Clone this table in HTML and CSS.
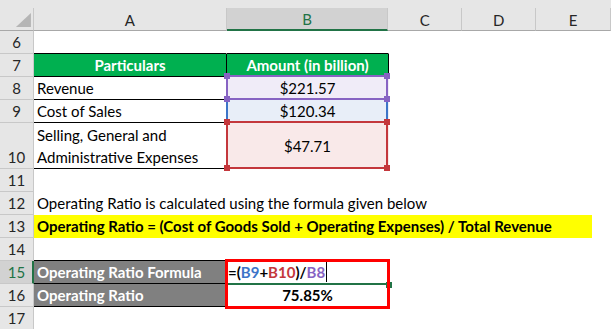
FILE: index.html
```html
<!DOCTYPE html>
<html>
<head>
<meta charset="utf-8">
<link rel="stylesheet" href="styles.css">
</head>
<body>
<div class="sheet">
  <div class="hdr">
    <div class="corner"><div class="tri"></div></div>
    <div class="ch ca">A</div>
    <div class="ch cb sel">B</div>
    <div class="ch cc">C</div>
    <div class="ch cd">D</div>
    <div class="ch ce">E</div>
  </div>

  <div class="row">
    <div class="rh">6</div>
    <div class="c ca bb"></div>
    <div class="c cb bb"></div>
    <div class="c cc"></div><div class="c cd"></div><div class="c ce"></div>
  </div>

  <div class="row">
    <div class="rh">7</div>
    <div class="c ca th bb br">Particulars</div>
    <div class="c cb th bb br">Amount (in billion)</div>
    <div class="c cc"></div><div class="c cd"></div><div class="c ce"></div>
  </div>

  <div class="row">
    <div class="rh">8</div>
    <div class="c ca bb br">Revenue</div>
    <div class="c cb num fill-purple bb">$221.57
      <div class="rng rng-purple"><i class="hd tl"></i><i class="hd tr"></i><i class="hd bl"></i><i class="hd br2"></i></div>
    </div>
    <div class="c cc"></div><div class="c cd"></div><div class="c ce"></div>
  </div>

  <div class="row">
    <div class="rh">9</div>
    <div class="c ca bb br">Cost of Sales</div>
    <div class="c cb num fill-blue bb">$120.34
      <div class="rng rng-blue"></div>
    </div>
    <div class="c cc"></div><div class="c cd"></div><div class="c ce"></div>
  </div>

  <div class="row r10">
    <div class="rh">10</div>
    <div class="c ca bb br">Selling, General and<br>Administrative Expenses</div>
    <div class="c cb num mid fill-red bb">$47.71
      <div class="rng rng-red"><i class="hd tl"></i><i class="hd tr"></i><i class="hd bl"></i><i class="hd br2"></i></div>
    </div>
    <div class="c cc"></div><div class="c cd"></div><div class="c ce"></div>
  </div>

  <div class="row">
    <div class="rh">11</div>
    <div class="c ca"></div><div class="c cb"></div><div class="c cc"></div><div class="c cd"></div><div class="c ce"></div>
  </div>

  <div class="row">
    <div class="rh">12</div>
    <div class="c ca">Operating Ratio is calculated using the formula given below</div>
    <div class="c cb"></div><div class="c cc"></div><div class="c cd"></div><div class="c ce"></div>
  </div>

  <div class="row">
    <div class="rh">13</div>
    <div class="c yellow">Operating Ratio = (Cost of Goods Sold + Operating Expenses) / Total Revenue</div>
    <div class="c rest"></div>
  </div>

  <div class="row">
    <div class="rh">14</div>
    <div class="c ca bb"></div><div class="c cb"></div><div class="c cc"></div><div class="c cd"></div><div class="c ce"></div>
  </div>

  <div class="row">
    <div class="rh sel-row">15</div>
    <div class="c ca gray bb br">Operating Ratio Formula</div>
    <div class="c cb formula">
      <span class="f">=(<span class="ref-blue">B9</span>+<span class="ref-red">B10</span>)/<span class="ref-purple">B8</span></span><span class="caret"></span>
      <div class="active"><i class="fillh"></i></div>
      <div class="redbox"></div>
    </div>
    <div class="c cc"></div><div class="c cd"></div><div class="c ce"></div>
  </div>

  <div class="row">
    <div class="rh">16</div>
    <div class="c ca gray bb br">Operating Ratio</div>
    <div class="c cb num bold">75.85%</div>
    <div class="c cc"></div><div class="c cd"></div><div class="c ce"></div>
  </div>

  <div class="row">
    <div class="rh">17</div>
    <div class="c ca"></div><div class="c cb"></div><div class="c cc"></div><div class="c cd"></div><div class="c ce"></div>
  </div>
</div>
</body>
</html>
```

FILE: styles.css
```css
* { box-sizing: border-box; margin: 0; padding: 0; }

body {
  margin: 0;
  background: #ffffff;
  font-family: Lato, "Liberation Sans", sans-serif;
  font-size: 15px;
  color: #000;
  width: 611px;
  height: 329px;
  overflow: hidden;
}

.sheet {
  display: flex;
  flex-direction: column;
  width: 611px;
}

/* column header */
.hdr {
  display: flex;
  height: 31px;
  padding-top: 8px;
  background: #e6e6e6;
}

.corner {
  width: 34px;
  height: 23px;
  border-right: 1px solid #c8c8c8;
  border-bottom: 1px solid #a8a8a8;
  display: flex;
  justify-content: flex-end;
  align-items: flex-end;
  padding: 0 2px 3px 0;
}

.tri {
  width: 15px;
  height: 14px;
  background: #b5b5b5;
  clip-path: polygon(100% 0, 100% 100%, 0 100%);
}

.ch {
  height: 23px;
  border-right: 1px solid #c8c8c8;
  border-bottom: 1px solid #a8a8a8;
  display: flex;
  align-items: center;
  justify-content: center;
  color: #262626;
  padding-top: 1px;
}

.ch.sel {
  background: #d2d2d2;
  border-bottom: 2px solid #217346;
  color: #217346;
}

/* widths */
.ca { width: 193px; }
.cb { width: 162px; }
.cc { width: 74px; }
.cd { width: 74px; }
.ce { width: 75px; }

/* rows */
.row {
  display: flex;
  height: 23px;
}

.row.r10 { height: 46px; }

.rh {
  width: 34px;
  flex: none;
  background: #e6e6e6;
  border-right: 1px solid #c8c8c8;
  border-bottom: 1px solid #c8c8c8;
  display: flex;
  align-items: flex-end;
  justify-content: center;
  line-height: 22px;
  color: #262626;
}

.rh.sel-row {
  background: #d2d2d2;
  border-right: 2px solid #217346;
  color: #217346;
  padding-left: 1px;
}

.c {
  flex: none;
  position: relative;
  border-right: 1px solid transparent;
  border-bottom: 1px solid transparent;
  display: flex;
  align-items: flex-end;
  line-height: 22px;
  padding: 0 3px;
  white-space: nowrap;
}

.bb { border-bottom-color: #000; }
.br { border-right-color: #000; }

.th {
  background: #00b050;
  color: #fff;
  font-weight: 700;
  justify-content: center;
}

.num { justify-content: center; }
.mid { align-items: center; }
.bold { font-weight: 700; }

.fill-purple { background: #f0ecf8; }
.fill-blue { background: #e8eef8; }
.fill-red { background: #f9e9e9; }

/* range highlights */
.rng {
  position: absolute;
  left: -1px;
  top: -2px;
  width: 162px;
  border: 2px solid;
}

.rng-purple { border-color: #8763c3; height: 25px; z-index: 3; }
.rng-blue { border-color: #3c74c8; height: 25px; z-index: 1; }
.rng-red { border-color: #c4373c; height: 48px; z-index: 3; }

.hd {
  position: absolute;
  width: 6px;
  height: 6px;
  background: inherit;
}

.rng-purple .hd { background: #8763c3; }
.rng-red .hd { background: #c4373c; }

.hd.tl { left: -4px; top: -4px; }
.hd.tr { right: -4px; top: -4px; }
.hd.bl { left: -4px; bottom: -4px; }
.hd.br2 { right: -4px; bottom: -4px; }

.yellow {
  width: 558px;
  background: #ffff00;
  font-weight: 700;
}

.rest { width: 19px; }

.gray {
  background: #808080;
  color: #fff;
  font-weight: 700;
}

.formula {
  padding-left: 1px;
  font-weight: 700;
}

.ref-blue { color: #3c74c8; }
.ref-red { color: #c4373c; }
.ref-purple { color: #8763c3; }

.caret {
  display: inline-block;
  width: 1px;
  height: 20px;
  background: #000;
  margin: 0 0 1px 1px;
  align-self: flex-end;
}

.active {
  position: absolute;
  left: -1px;
  top: -2px;
  width: 163px;
  height: 26px;
  border: 2px solid #217346;
  z-index: 4;
}

.fillh {
  position: absolute;
  right: -5px;
  bottom: -5px;
  width: 6px;
  height: 6px;
  background: #217346;
}

.redbox {
  position: absolute;
  left: -2px;
  top: -2px;
  width: 165px;
  height: 50px;
  border: 3px solid #ff0000;
  z-index: 5;
}
```
